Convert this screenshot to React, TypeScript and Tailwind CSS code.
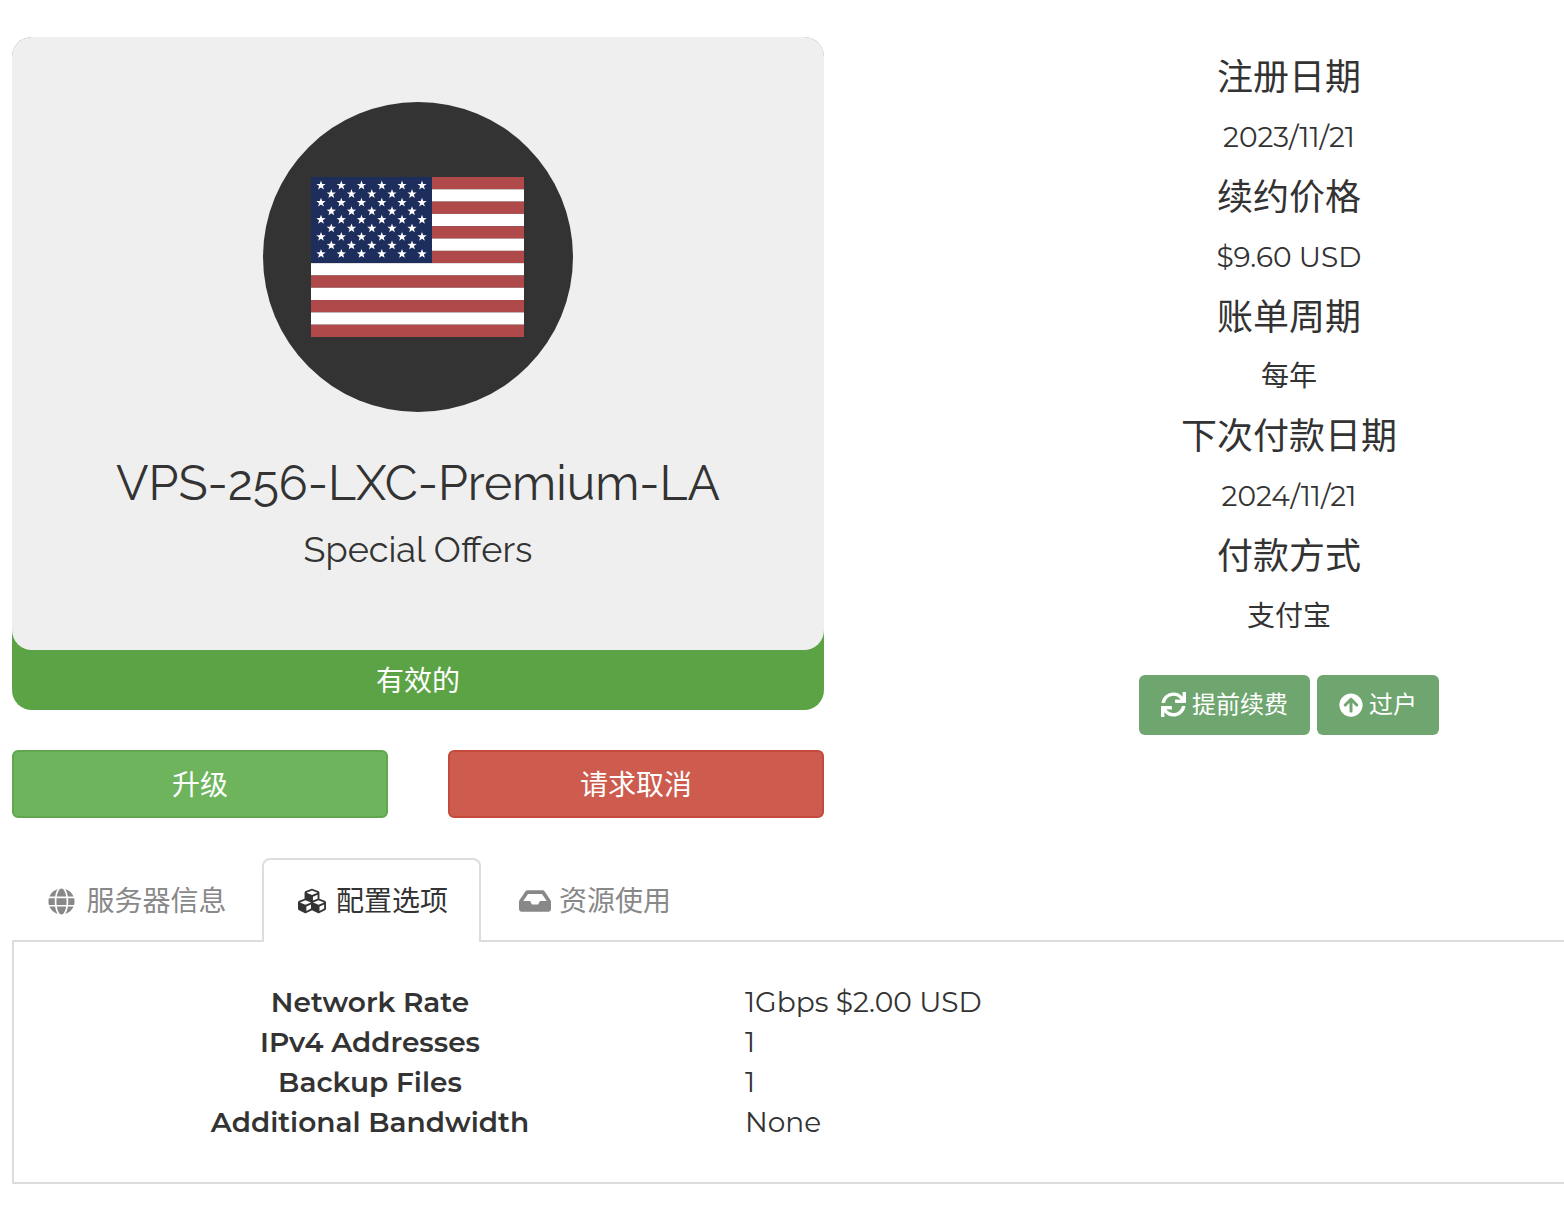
import React from "react";
import { FaSync, FaArrowCircleUp, FaGlobe, FaCubes, FaInbox } from "react-icons/fa";

function Star({ x, y }: { x: number; y: number }) {
  const pts: string[] = [];
  for (let i = 0; i < 10; i++) {
    const r = i % 2 === 0 ? 4.9 : 2.0;
    const a = -Math.PI / 2 + (i * Math.PI) / 5;
    pts.push(`${(x + r * Math.cos(a)).toFixed(2)},${(y + r * Math.sin(a)).toFixed(2)}`);
  }
  return <polygon points={pts.join(" ")} fill="#fff" />;
}

function Flag() {
  const stripes = Array.from({ length: 13 }, (_, i) => i);
  const sx = [10, 30.3, 50.5, 70.8, 91, 111];
  const sx2 = [20.3, 40.5, 60.8, 81, 101];
  const sy = [8.5, 25.6, 42.7, 59.8, 76.9];
  const sy2 = [17, 34.2, 51.3, 68.4];
  return (
    <svg width="213" height="160" viewBox="0 0 213 160" className="block -translate-x-px">
      {stripes.map((i) => (
        <rect key={i} x="0" y={(i * 160) / 13} width="213" height={160 / 13} fill={i % 2 === 0 ? "#b04a4a" : "#ffffff"} />
      ))}
      <rect x="0" y="0" width="121" height="86" fill="#1d2d5c" />
      {sy.map((y) => sx.map((x) => <Star key={`${x}-${y}`} x={x} y={y} />))}
      {sy2.map((y) => sx2.map((x) => <Star key={`${x}-${y}`} x={x} y={y} />))}
    </svg>
  );
}

function Info({ title, value }: { title: string; value: string }) {
  return (
    <>
      <div className="h-[59.9px] flex items-center justify-center text-[36px] text-[#333]">{title}</div>
      <div className="h-[59.9px] flex items-center justify-center text-[28px] text-[#333]">{value}</div>
    </>
  );
}

function Row({ k, v }: { k: string; v: string }) {
  return (
    <div className="flex h-[40px] items-center">
      <div className="w-[712px] text-center font-semibold text-[#333]">{k}</div>
      <div className="pl-[19px] text-[#333]">{v}</div>
    </div>
  );
}

export default function App() {
  return (
    <div className="font-['Montserrat','Inter','Noto_Sans_CJK_SC',sans-serif] w-[1564px] h-[1218px] overflow-hidden bg-white pl-[12px] pt-[37px] text-[#333] text-[28px]">
      <div className="flex">
        <div className="w-[812px] shrink-0">
          <div className="rounded-[20px] bg-[#5ca345]">
            <div className="h-[613px] rounded-[20px] bg-[#efefef] pt-[65px] flex flex-col items-center font-['Raleway','Lato','Noto_Sans_CJK_SC',sans-serif]">
              <div className="w-[310px] h-[310px] rounded-full bg-[#333333] flex items-center justify-center">
                <Flag />
              </div>
              <div className="mt-[41px] text-[48px] leading-[60px] text-[#333] font-normal">VPS-256-LXC-Premium-LA</div>
              <div className="mt-[15px] text-[36px] leading-[42px] text-[#333]">Special Offers</div>
            </div>
            <div className="h-[60px] pt-[1px] leading-[60px] text-center text-white text-[28px]">有效的</div>
          </div>
          <div className="mt-[40px] flex justify-between">
            <div className="w-[376px] h-[68px] pt-[2px] rounded-[6px] border-2 border-[#5fa84f] bg-[#6db45c] text-white flex items-center justify-center">升级</div>
            <div className="w-[376px] h-[68px] pt-[2px] rounded-[6px] border-2 border-[#c44a3d] bg-[#cd5c4f] text-white flex items-center justify-center">请求取消</div>
          </div>
        </div>
        <div className="ml-[190px] w-[550px] shrink-0 text-center pt-[10px]">
          <div>
            <Info title="注册日期" value="2023/11/21" />
            <Info title="续约价格" value="$9.60 USD" />
            <Info title="账单周期" value="每年" />
            <Info title="下次付款日期" value="2024/11/21" />
            <Info title="付款方式" value="支付宝" />
          </div>
          <div className="mt-[29px] flex justify-center gap-[7px] text-white text-[24px]">
            <div className="h-[60px] w-[171px] rounded-[6px] bg-[#6fa66f] flex items-center justify-center gap-[6px]">
              <FaSync className="w-[25px] h-[25px]" />
              <span>提前续费</span>
            </div>
            <div className="h-[60px] w-[122px] rounded-[6px] bg-[#6fa66f] flex items-center justify-center gap-[6px]">
              <FaArrowCircleUp className="w-[24px] h-[24px]" />
              <span>过户</span>
            </div>
          </div>
        </div>
      </div>
      <div className="mt-[40px] w-[1552px]">
        <div className="relative z-10 flex h-[84px]">
          <div className="w-[250px] pt-[2px] pl-[1px] flex items-center justify-center gap-[11px] text-[#888]">
            <FaGlobe className="w-[27px] h-[27px]" />
            <span>服务器信息</span>
          </div>
          <div className="w-[219px] h-[84px] pl-[3px] rounded-t-[8px] border-2 border-b-0 border-[#dddddd] bg-white flex items-center justify-center gap-[10px]">
            <FaCubes className="w-[28px] h-[28px]" />
            <span>配置选项</span>
          </div>
          <div className="w-[228px] pt-[2px] flex items-center justify-center gap-[8px] text-[#888]">
            <FaInbox className="w-[32px] h-[32px]" />
            <span>资源使用</span>
          </div>
        </div>
        <div className="-mt-[2px] h-[244px] border-2 border-r-0 border-[#dddddd] pt-[40px]">
          <Row k="Network Rate" v="1Gbps $2.00 USD" />
          <Row k="IPv4 Addresses" v="1" />
          <Row k="Backup Files" v="1" />
          <Row k="Additional Bandwidth" v="None" />
        </div>
      </div>
    </div>
  );
}
